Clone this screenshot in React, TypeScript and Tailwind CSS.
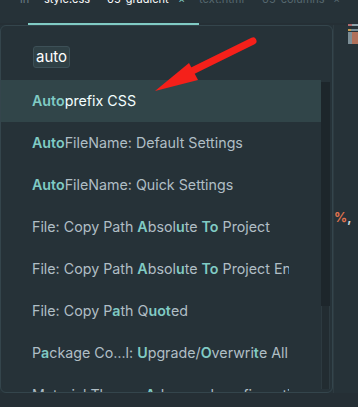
import React from "react";

type Seg = [string, boolean];

const rows: Seg[][] = [
  [["Auto", true], ["prefix CSS", false]],
  [["Auto", true], ["FileName: Default Settings", false]],
  [["Auto", true], ["FileName: Quick Settings", false]],
  [["File: Copy Path ", false], ["A", true], ["bsol", false], ["u", true], ["te ", false], ["To", true], [" Project", false]],
  [["File: Copy Path ", false], ["A", true], ["bsol", false], ["u", true], ["te ", false], ["To", true], [" Project End", false]],
  [["File: Copy P", false], ["a", true], ["th Q", false], ["uot", true], ["ed", false]],
  [["P", false], ["a", true], ["ckage Co…l: ", false], ["U", true], ["pgrade/", false], ["O", true], ["verwri", false], ["t", true], ["e All Packages", false]],
  [["M", false], ["a", true], ["terial Theme: ", false], ["A", true], ["dvanced c", false], ["o", true], ["nfiguration", false]],
];

const tabs: [string, string, string][] = [
  ["in", "w-[24px]", "text-[#6b7d85]"],
  ["style.css", "w-[63px]", "text-white"],
  ["05-gradient", "w-[71px]", "text-white"],
  ["×", "w-[21px]", "text-[#80cbc4]"],
  ["text.html", "w-[63px]", "text-[#56686f]"],
  ["05-columns", "w-[71px]", "text-[#56686f]"],
  ["×", "w-[20px]", "text-[#56686f]"],
];

export default function App() {
  return (
    <div
      className="relative w-[358px] h-[407px] overflow-hidden bg-[#252f35]"
      style={{ fontFamily: "Inter, 'Noto Sans', sans-serif" }}
    >
      {/* tab bar */}
      <div className="h-[23px] bg-[#263238] overflow-hidden">
        <div className="flex items-start -mt-[6px] pl-[20px] text-[11px] leading-[11px] whitespace-nowrap">
          {tabs.map(([t, w, c], i) => (
            <span key={i} className={"shrink-0 " + w + " " + c}>
              {t}
            </span>
          ))}
        </div>
      </div>
      <div className="h-[2px] ml-[28px] w-[171px] bg-[#80cbc4]" />

      <div className="flex bg-[#263238]">
        {/* panel */}
        <div className="w-[333px] h-[368px] shrink-0 rounded-[6px] border border-[#34454c] bg-[#263238] overflow-hidden flex flex-col">
          <div className="pl-[32px] pt-[20px] flex">
            <div className="h-[22px] px-[2px] rounded-[3px] bg-[#2f4045] border border-[#3d5057] text-[15px] leading-[20px] text-white">
              auto
            </div>
          </div>
          <div className="mt-[8px] ml-[31px] w-[269px] h-px bg-[#3a4a51]" />
          <div className="mt-[4px] flex">
            <div className="w-[320px] flex flex-col">
              {rows.map((segs, i) => (
                <div
                  key={i}
                  className={
                    "h-[42px] shrink-0 pl-[31px] pr-[32px] flex items-center whitespace-nowrap overflow-hidden text-[14.25px] " +
                    (i === 0 ? "bg-[#314549] text-[#f4ffff]" : "text-[#b0bec5]")
                  }
                >
                  <span className="overflow-hidden block">
                    {segs.map(([t, hl], j) =>
                      hl ? (
                        <span key={j} className="font-semibold text-[#80cbc4]">
                          {t}
                        </span>
                      ) : (
                        <span key={j}>{t}</span>
                      )
                    )}
                  </span>
                </div>
              ))}
            </div>
            <div className="w-[9px] mt-[2px] flex flex-col">
              <div className="h-[224px] bg-[#1d262b]" />
              <div className="h-[83px] bg-[#222c31] border-x border-[#2d3a40]" />
            </div>
          </div>
        </div>

        {/* editor to the right */}
        <div className="flex-1 flex flex-col bg-[#263238] border-l border-[#2e3b41]">
          <div className="ml-[14px] mt-[-1px] flex flex-col gap-0">
            <div className="flex">
              <div className="w-[4px] h-[2px] bg-[#b06a6e]" />
              <div className="w-[6px] h-[2px] bg-[#8fa3ab]" />
            </div>
            <div className="flex mt-[3px]">
              <div className="w-[3px] h-[2px] bg-[#c59a4c]" />
              <div className="w-[7px] h-[2px] bg-[#7a9099]" />
            </div>
            <div className="flex mt-[1px]">
              <div className="w-[4px] h-[12px] bg-[#7d8f97]" />
              <div className="w-[6px] h-[12px] bg-[#b0705a]" />
            </div>
          </div>
          <div className="mt-[167px] flex items-end text-[13px] leading-[13px] font-bold">
            <span className="text-[#e0744f]">%</span>
            <span className="text-[#cfd8dc]">,</span>
          </div>
        </div>
      </div>

      {/* red annotation arrow */}
      <svg
        className="absolute left-0 top-0 pointer-events-none"
        width="358"
        height="407"
        viewBox="0 0 358 407"
      >
        <line x1="253" y1="41" x2="188" y2="73" stroke="#f5201a" strokeWidth="7" strokeLinecap="round" />
        <polygon points="155,91 189,63 198,80" fill="#f5201a" />
      </svg>
    </div>
  );
}
